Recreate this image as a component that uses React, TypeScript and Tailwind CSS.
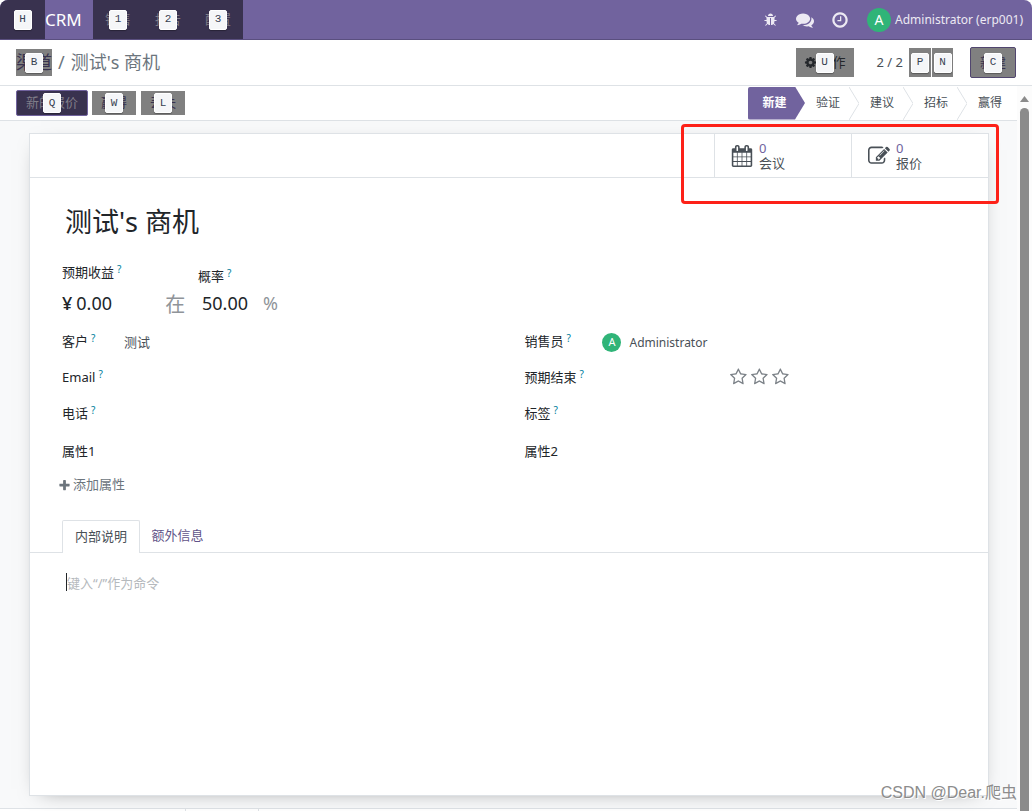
import { PropsWithChildren } from 'react';

const icons = {
  bug: 'M1632 960q0 26-19 45t-45 19h-224q0 171-67 290l208 209q19 19 19 45t-19 45q-18 19-45 19t-45-19l-198-197q-5 5-15 13t-42 28.5-65 36.5-82 29-97 13v-896h-128v896q-51 0-101.5-13.5t-87-33-66-39-43.5-32.5l-15-14-183 207q-20 21-48 21-24 0-43-16-19-18-20.5-44.5t15.5-46.5l202-227q-58-114-58-274h-224q-26 0-45-19t-19-45 19-45 45-19h224v-294l-173-173q-19-19-19-45t19-45 45-19 45 19l173 173h844l173-173q19-19 45-19t45 19 19 45-19 45l-173 173v294h224q26 0 45 19t19 45zm-480-576h-640q0-133 93.5-226.5t226.5-93.5 226.5 93.5 93.5 226.5z',
  comments:
    'M1408 768q0 139-94 257t-256.5 186.5-353.5 68.5q-86 0-176-16-124 88-278 128-36 9-86 16h-3q-11 0-20.5-8t-11.5-21q-1-3-1-6.5t.5-6.5 2-6l2.5-5 3.5-5.5 4-5 4.5-5 4-4.5q5-6 23-25t26-29.5 22.5-29 25-38.5 20.5-44q-124-72-195-177t-71-224q0-139 94-257t256.5-186.5 353.5-68.5 353.5 68.5 256.5 186.5 94 257zm384 256q0 120-71 224.5t-195 176.5q10 24 20.5 44t25 38.5 22.5 29 26 29.5 23 25q1 1 4 4.5t4.5 5 4 5 3.5 5.5l2.5 5 2 6 .5 6.5-1 6.5q-3 14-13 22t-22 7q-50-7-86-16-154-40-278-128-90 16-176 16-271 0-472-132 58 4 88 4 161 0 309-45t264-129q125-92 192-212t67-254q0-77-23-152 129 71 204 178t75 230z',
  clock: 'M1024 544v448q0 14-9 23t-23 9h-320q-14 0-23-9t-9-23v-64q0-14 9-23t23-9h224v-352q0-14 9-23t23-9h64q14 0 23 9t9 23zm416 352q0-148-73-273t-198-198-273-73-273 73-198 198-73 273 73 273 198 198 273 73 273-73 198-198 73-273zm224 0q0 209-103 385.5t-279.5 279.5-385.5 103-385.5-103-279.5-279.5-103-385.5 103-385.5 279.5-279.5 385.5-103 385.5 103 279.5 279.5 103 385.5z',
  cog: 'M1152 896q0-106-75-181t-181-75-181 75-75 181 75 181 181 75 181-75 75-181zm512-109v222q0 12-8 23t-20 13l-185 28q-19 54-39 91 35 50 107 138 10 12 10 25t-9 23q-27 37-99 108t-94 71q-12 0-26-9l-138-108q-44 23-91 38-16 136-29 186-7 28-36 28h-222q-14 0-24.5-8.5t-11.5-21.5l-28-184q-49-16-90-37l-141 107q-10 9-25 9-14 0-25-11-126-114-165-168-7-10-7-23 0-12 8-23 15-21 51-66.5t54-70.5q-27-50-41-99l-183-27q-13-2-21-12.5t-8-23.5v-222q0-12 8-23t19-13l186-28q14-46 39-92-40-57-107-138-10-12-10-24 0-10 9-23 26-36 98.5-107.5t94.5-71.5q13 0 26 10l138 107q44-23 91-38 16-136 29-186 7-28 36-28h222q14 0 24.5 8.5t11.5 21.5l28 184q49 16 90 37l142-107q9-9 24-9 13 0 25 10 129 119 165 170 7 8 7 22 0 12-8 23-15 21-51 66.5t-54 70.5q26 50 41 98l183 28q13 2 21 12.5t8 23.5z',
  calendar:
    'M192 1664h288v-288h-288v288zm352 0h320v-288h-320v288zm-352-352h288v-320h-288v320zm352 0h320v-320h-320v320zm-352-384h288v-288h-288v288zm736 736h320v-288h-320v288zm-384-736h320v-288h-320v288zm768 736h288v-288h-288v288zm-384-352h320v-320h-320v320zm-352-864v-288q0-13-9.5-22.5t-22.5-9.5h-64q-13 0-22.5 9.5t-9.5 22.5v288q0 13 9.5 22.5t22.5 9.5h64q13 0 22.5-9.5t9.5-22.5zm736 864h288v-320h-288v320zm-384-384h320v-288h-320v288zm384 0h288v-288h-288v288zm32-480v-288q0-13-9.5-22.5t-22.5-9.5h-64q-13 0-22.5 9.5t-9.5 22.5v288q0 13 9.5 22.5t22.5 9.5h64q13 0 22.5-9.5t9.5-22.5zm384-64v1280q0 52-38 90t-90 38h-1408q-52 0-90-38t-38-90v-1280q0-52 38-90t90-38h128v-96q0-66 47-113t113-47h64q66 0 113 47t47 113v96h384v-96q0-66 47-113t113-47h64q66 0 113 47t47 113v96h128q52 0 90 38t38 90z',
  edit: 'M888 1184l116-116-152-152-116 116v56h96v96h56zm440-720q-16-16-33 1l-350 350q-17 17-1 33t33-1l350-350q17-17 1-33zm80 594v190q0 119-84.5 203.5t-203.5 84.5h-832q-119 0-203.5-84.5t-84.5-203.5v-832q0-119 84.5-203.5t203.5-84.5h832q63 0 117 25 15 7 18 23 3 17-9 29l-49 49q-14 14-32 8-23-6-45-6h-832q-66 0-113 47t-47 113v832q0 66 47 113t113 47h832q66 0 113-47t47-113v-126q0-13 9-22l64-64q15-15 35-7t20 29zm-96-738l288 288-672 672h-288v-288zm444 132l-92 92-288-288 92-92q28-28 68-28t68 28l152 152q28 28 28 68t-28 68z',
  star: 'M1137 1004l306-297-422-62-189-382-189 382-422 62 306 297-73 421 378-199 377 199zm527-357q0 22-26 48l-363 354 86 500q1 7 1 20 0 50-41 50-19 0-40-12l-449-236-449 236q-22 12-40 12-21 0-31.5-14.5t-10.5-35.5q0-6 2-20l86-500-364-354q-25-27-25-48 0-37 56-46l502-73 225-455q19-41 49-41t49 41l225 455 502 73q56 9 56 46z',
  plus: 'M1600 736v192q0 40-28 68t-68 28h-416v416q0 40-28 68t-68 28h-192q-40 0-68-28t-28-68v-416h-416q-40 0-68-28t-28-68v-192q0-40 28-68t68-28h416v-416q0-40 28-68t68-28h192q40 0 68 28t28 68v416h416q40 0 68 28t28 68z',
};

function Icon({ name, className }: { name: keyof typeof icons; className: string }) {
  return (
    <svg viewBox="0 0 1792 1792" fill="currentColor" aria-hidden="true" className={`shrink-0 overflow-visible ${className}`}>
      <path d={icons[name]} />
    </svg>
  );
}

// Keyboard hint shown on top of a dimmed control
function Hotkey({ children }: PropsWithChildren) {
  return (
    <span className="absolute inset-0 flex items-center justify-center">
      <kbd className="flex h-5 w-[18px] items-center justify-center rounded-xs border border-white bg-[#f5f6f8] font-['Liberation_Mono',monospace] text-[11px] leading-none text-[#374151] shadow-[0_1px_1px_rgba(0,0,0,0.3)]">
        {children}
      </kbd>
    </span>
  );
}

const menus = [
  { label: '销售', hotkey: '1' },
  { label: '报告', hotkey: '2' },
  { label: '配置', hotkey: '3' },
];

function Navbar() {
  return (
    <header className="flex h-10 items-stretch overflow-hidden rounded-t-lg border-b border-[#5a4f7f] bg-[#71639e] text-white">
      <button type="button" aria-label="Home" className="relative w-[45px] bg-[#39324f]">
        <Hotkey>H</Hotkey>
      </button>
      <a href="#crm" className="flex w-12 items-center pt-px text-[17px]">
        CRM
      </a>
      {menus.map((menu) => (
        <button key={menu.hotkey} type="button" className="relative w-[50px] bg-[#39324f] text-[13px] text-[#807d89]">
          {menu.label}
          <Hotkey>{menu.hotkey}</Hotkey>
        </button>
      ))}
      <div className="ml-auto flex items-center pr-[9px] text-[#ece9f3]">
        <button type="button" aria-label="Debug" className="mr-[18px]">
          <Icon name="bug" className="size-[14px]" />
        </button>
        <button type="button" aria-label="Messages" className="mr-[17px]">
          <Icon name="comments" className="size-[18px]" />
        </button>
        <button type="button" aria-label="Activities" className="mr-[18px]">
          <Icon name="clock" className="size-[18px]" />
        </button>
        <button type="button" className="flex items-center gap-1 text-xs">
          <span className="flex size-6 items-center justify-center rounded-full bg-[#30b478] text-sm text-white">A</span>
          Administrator (erp001)
        </button>
      </div>
    </header>
  );
}

function ControlPanel() {
  return (
    <div className="flex h-[46px] items-center border-b border-[#dee2e6] px-4">
      <nav className="flex items-center text-lg leading-[27px] text-[#6c757d]">
        <a href="#pipeline" className="relative bg-[#808080] text-[#39324f]">
          渠道
          <Hotkey>B</Hotkey>
        </a>
        <span className="mx-[6px]">/</span>
        <span>测试's 商机</span>
      </nav>
      <div className="ml-auto flex items-center text-[13px]">
        <button type="button" className="relative flex h-[29px] w-[58px] items-center justify-between bg-[#808080] px-2 text-[#24272b]">
          <Icon name="cog" className="size-[13px]" />
          作
          <Hotkey>U</Hotkey>
        </button>
        <span className="ml-[23px] mr-[6px] text-[#495057]">2 / 2</span>
        <button type="button" aria-label="Previous" className="relative mr-px h-[29px] w-[22px] bg-[#808080]">
          <Hotkey>P</Hotkey>
        </button>
        <button type="button" aria-label="Next" className="relative h-[29px] w-[21px] bg-[#808080]">
          <Hotkey>N</Hotkey>
        </button>
        <button type="button" className="relative ml-[17px] h-[31px] w-[46px] rounded-xs border border-[#51466f] bg-[#808080] text-[#39324f]">
          新建
          <Hotkey>C</Hotkey>
        </button>
      </div>
    </div>
  );
}

const stages = ['验证', '建议', '招标', '赢得'];

function StatusBar() {
  return (
    <div className="flex h-[35px] items-center border-b border-[#dee2e6] bg-white pl-4">
      <div className="flex items-center text-[13px]">
        <button type="button" className="relative mr-1 h-[26px] w-[72px] rounded-xs border border-[#71639e] bg-[#39324f] text-[#807d89]">
          新的报价
          <Hotkey>Q</Hotkey>
        </button>
        <button type="button" className="relative mr-[5px] h-6 w-11 bg-[#808080] text-[#39324f]">
          赢得
          <Hotkey>W</Hotkey>
        </button>
        <button type="button" className="relative h-6 w-11 bg-[#808080] text-[#39324f]">
          丢失
          <Hotkey>L</Hotkey>
        </button>
      </div>
      <div className="ml-auto flex h-[33px] items-center text-xs text-[#495057]">
        <button
          type="button"
          aria-current="step"
          className="-mr-1 h-full w-[57px] rounded-l-xs bg-[#71639e] pr-1 font-bold text-white [clip-path:polygon(0_0,47px_0,57px_50%,47px_100%,0_100%)]"
        >
          新建
        </button>
        {stages.map((stage, i) => (
          <button key={stage} type="button" className="relative h-full w-[54px]">
            {stage}
            {i < stages.length - 1 && (
              <svg viewBox="0 0 10 33" className="absolute -right-1 top-0 h-full w-[10px] fill-none stroke-[#dee2e6]" aria-hidden="true">
                <path d="M0 0L10 16.5L0 33" />
              </svg>
            )}
          </button>
        ))}
      </div>
    </div>
  );
}

function FieldLabel({ htmlFor, help = true, children }: PropsWithChildren<{ htmlFor: string; help?: boolean }>) {
  return (
    <label htmlFor={htmlFor} className="flex shrink-0 items-start leading-5 text-[#212529]">
      {children}
      {help && <sup className="top-0 ml-[3px] text-[10px] leading-[14px] text-[#017e9b]">?</sup>}
    </label>
  );
}

function StatButton({ icon, count, label }: { icon: 'calendar' | 'edit'; count: number; label: string }) {
  return (
    <button type="button" className="flex w-[137px] items-center gap-[6px] border-l border-[#dee2e6] pl-4 text-left text-[#495057]">
      <Icon name={icon} className="size-[22px]" />
      <span className="flex flex-col text-[13px] leading-[15px]">
        <span className="text-[#71639e]">{count}</span>
        <span>{label}</span>
      </span>
    </button>
  );
}

const inputClass = 'min-w-0 bg-transparent outline-none';

function Sheet() {
  return (
    <section className="relative mx-7 ml-[29px] mt-3 flex flex-1 flex-col border border-[#dee2e6] bg-white shadow-[0_5px_20px_-12px_rgba(0,0,0,0.5)]">
      <div className="flex h-11 justify-end border-b border-[#dee2e6]">
        <StatButton icon="calendar" count={0} label="会议" />
        <StatButton icon="edit" count={0} label="报价" />
      </div>
      <div className="absolute -right-[11px] -top-[10px] h-20 w-[318px] rounded-sm border-3 border-[#fd2118]" />

      <div className="px-8 pt-6">
        <input
          aria-label="商机"
          defaultValue="测试's 商机"
          className={`${inputClass} block h-10 w-full pl-[3px] text-[27px] text-[#212529]`}
        />

        <div className="mt-5 flex">
          <div className="w-[136px]">
            <FieldLabel htmlFor="revenue">预期收益</FieldLabel>
            <div className="mt-[5px] flex items-center text-lg leading-7 text-[#212529]">
              <span className="mr-1 font-medium">¥</span>
              <input id="revenue" defaultValue="0.00" className={`${inputClass} w-16`} />
              <span className="ml-[25px] pt-1 text-xl leading-7 text-[#8f9499]">在</span>
            </div>
          </div>
          <div className="pt-1">
            <FieldLabel htmlFor="probability">概率</FieldLabel>
            <div className="mt-[3px] flex items-center pl-1 text-lg leading-7 text-[#212529]">
              <input id="probability" defaultValue="50.00" className={`${inputClass} w-[61px]`} />
              <span className="text-[#8f9499]">%</span>
            </div>
          </div>
        </div>

        <div className="mt-1 grid grid-cols-[463fr_432fr]">
          <div className="flex flex-col">
            <div className="flex h-9 items-center">
              <div className="w-[62px]">
                <FieldLabel htmlFor="customer">客户</FieldLabel>
              </div>
              <input id="customer" defaultValue="测试" className={`${inputClass} flex-1 pt-[3px]`} />
            </div>
            <div className="flex h-9 items-center gap-4">
              <FieldLabel htmlFor="email">Email</FieldLabel>
              <input id="email" type="email" className={`${inputClass} flex-1`} />
            </div>
            <div className="flex h-9 items-center gap-4">
              <FieldLabel htmlFor="phone">电话</FieldLabel>
              <input id="phone" type="tel" className={`${inputClass} flex-1`} />
            </div>
            <div className="flex h-10 items-center gap-4">
              <FieldLabel htmlFor="property1" help={false}>
                属性1
              </FieldLabel>
              <input id="property1" className={`${inputClass} flex-1`} />
            </div>
            <button type="button" className="-ml-1 flex h-7 items-center gap-[2px] self-start text-[#6c757d]">
              <Icon name="plus" className="size-[13px]" />
              添加属性
            </button>
          </div>
          <div className="flex flex-col">
            <div className="flex h-9 items-center">
              <div className="w-[78px]">
                <FieldLabel htmlFor="salesperson">销售员</FieldLabel>
              </div>
              <div className="flex flex-1 items-center gap-2 pt-[3px]">
                <span className="flex size-[19px] items-center justify-center rounded-full bg-[#30b478] text-[11px] text-white">A</span>
                <input id="salesperson" defaultValue="Administrator" className={`${inputClass} flex-1 text-xs`} />
              </div>
            </div>
            <div className="flex h-9 items-center">
              <div className="w-[78px]">
                <FieldLabel htmlFor="closing">预期结束</FieldLabel>
              </div>
              <input id="closing" className={`${inputClass} w-32`} />
              <div className="flex gap-[3px] text-[#7c8288]">
                {['中', '高', '非常高'].map((level) => (
                  <button key={level} type="button" aria-label={level}>
                    <Icon name="star" className="size-[18px]" />
                  </button>
                ))}
              </div>
            </div>
            <div className="flex h-9 items-center gap-4">
              <FieldLabel htmlFor="tags">标签</FieldLabel>
              <input id="tags" className={`${inputClass} flex-1`} />
            </div>
            <div className="flex h-10 items-center gap-4">
              <FieldLabel htmlFor="property2" help={false}>
                属性2
              </FieldLabel>
              <input id="property2" className={`${inputClass} flex-1`} />
            </div>
          </div>
        </div>
      </div>

      <div role="tablist" className="mt-[21px] flex h-[33px] border-b border-[#dee2e6] px-8">
        <button type="button" role="tab" aria-selected="true" className="-mb-px w-[78px] rounded-t-xs border border-b-0 border-[#dee2e6] bg-white text-[#495057]">
          内部说明
        </button>
        <button type="button" role="tab" aria-selected="false" className="w-[75px] text-[#5f5388]">
          额外信息
        </button>
      </div>
      <div className="flex flex-1 items-start px-9 pt-5">
        <span className="h-[18px] w-px bg-[#212529]" />
        <textarea
          aria-label="内部说明"
          placeholder="键入“/”作为命令"
          className={`${inputClass} h-40 flex-1 resize-none leading-5 placeholder:text-[#b5b9bd]`}
        />
      </div>
    </section>
  );
}

export default function App() {
  return (
    <div className="relative flex min-h-screen flex-col bg-white font-['Noto_Sans','Noto_Sans_CJK_SC',sans-serif] text-[13px] text-[#495057]">
      <Navbar />
      <ControlPanel />
      <div className="flex flex-1">
        <main className="flex min-w-0 flex-1 flex-col bg-[#f8f9fa]">
          <StatusBar />
          <Sheet />
          <div className="mt-3 flex h-[3px] border-t border-[#dee2e6] bg-white">
            <span className="w-[186px] border-r border-[#dee2e6]" />
            <span className="w-[73px] border-r border-[#dee2e6]" />
          </div>
        </main>
        <div className="flex w-[15px] flex-col items-center bg-[#fcfcfc] pt-[10px]">
          <svg viewBox="0 0 9 6" className="h-[6px] w-[9px] fill-[#8b8b8b]" aria-hidden="true">
            <path d="M4.5 0L9 6H0Z" />
          </svg>
          <span className="mt-[6px] w-[9px] flex-1 rounded-t-full bg-[#8b8b8b]" />
        </div>
      </div>
      <div className="absolute bottom-2 right-[15px] font-['Liberation_Sans','Noto_Sans_CJK_SC',sans-serif] text-base leading-5 text-[#8c8c8c] [text-shadow:1px_1px_0_#ffffff]">
        CSDN @Dear.爬虫
      </div>
    </div>
  );
}
